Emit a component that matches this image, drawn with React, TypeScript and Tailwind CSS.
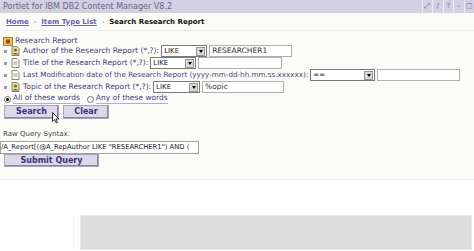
import React from "react";

const F = { fontFamily: '"DejaVu Sans", Verdana, sans-serif' };

function TreeDot() {
  return <span className="w-[3px] h-[3px] bg-[#9a98b8] inline-block mr-[4px]" />;
}

function DocIcon({ person }: { person?: boolean }) {
  return (
    <svg width="9" height="10" viewBox="0 0 9 10" className="mr-[3px] shrink-0">
      <path d="M1 0.5h5l2 2v7h-7z" fill={person ? "#e8dfa0" : "#fff"} stroke="#6b6a58" strokeWidth="0.8" />
      {person ? (
        <>
          <circle cx="4.5" cy="4" r="1.6" fill="#7a6a2a" />
          <path d="M2 8.5c0-2 5-2 5 0z" fill="#7a6a2a" />
        </>
      ) : (
        <path d="M2.5 4h4M2.5 6h4" stroke="#6b6a58" strokeWidth="0.7" />
      )}
    </svg>
  );
}

function Select({ w, value }: { w: string; value: string }) {
  return (
    <div className={`${w} h-[12px] border border-[#7a7a7a] bg-white flex items-center shrink-0`}>
      <span className="flex-1 pl-[2px] text-[7px] text-[#222] leading-none">{value}</span>
      <span className="w-[9px] h-[9px] mr-[1px] bg-[#d8d8d8] border border-[#999] flex items-center justify-center">
        <span className="w-0 h-0 border-l-[2px] border-r-[2px] border-t-[3px] border-l-transparent border-r-transparent border-t-black" />
      </span>
    </div>
  );
}

function Input({ w, value }: { w: string; value?: string }) {
  return (
    <div className={`${w} h-[12px] border border-[#b0b0b0] bg-white flex items-center pl-[2px] text-[7.5px] text-[#333] leading-none shrink-0`}>
      {value}
    </div>
  );
}

function Row({ label, person, sel, selW, inp, inpW, size }: { label: string; person?: boolean; sel: string; selW: string; inp?: string; inpW: string; size: string }) {
  return (
    <div className="flex items-center h-[12px] ml-[4px]">
      <TreeDot />
      <DocIcon person={person} />
      <span className={`${size} text-[#463f78] whitespace-nowrap mr-[2px] leading-none`}>{label}</span>
      <Select w={selW} value={sel} />
      <span className="w-[2px]" />
      <Input w={inpW} value={inp} />
    </div>
  );
}

function Btn({ children, w, h }: { children: React.ReactNode; w: string; h: string }) {
  return (
    <div className={`${w} ${h} bg-[#dcd8ea] border border-[#a8a4bc] shadow-[inset_-1px_-1px_0_#8a86a0] flex items-center justify-center text-[8px] font-bold text-[#3b3478] leading-none`}>
      {children}
    </div>
  );
}

export default function App() {
  return (
    <div style={F} className="w-[474px] h-[251px] bg-white flex flex-col overflow-hidden relative">
      <div className="bg-[#fbfcf8] flex flex-col h-[180px] border-b border-[#eeeeee] shrink-0">
        <div className="h-[13px] bg-[#d3cfe4] flex items-center justify-between shrink-0">
          <span className="pl-[3px] text-[8px] text-[#6a6880] leading-none">Portlet for IBM DB2 Content Manager V8.2</span>
          <div className="flex h-full">
            {["⤢", "/", "?", "–", "□"].map((c, i) => (
              <span key={i} className="w-[10.5px] h-full border-l border-[#ecebf4] flex items-center justify-center text-[7px] text-[#6a6880] leading-none">{c}</span>
            ))}
          </div>
        </div>
        <div className="h-[17px] flex items-center pl-[6px] text-[7px] font-bold leading-none shrink-0 pt-[1px]">
          <span className="text-[#6b62a0] underline">Home</span>
          <span className="text-[#8a88a0] mx-[5px] text-[6px]">›</span>
          <span className="text-[#6b62a0] underline">Item Type List</span>
          <span className="text-[#8a88a0] mx-[5px] text-[6px]">›</span>
          <span className="text-[#111]">Search Research Report</span>
        </div>
        <div className="h-px bg-[#ececf2] mb-[5px] shrink-0" />
        <div className="flex items-center h-[9px] ml-[3px] shrink-0">
          <svg width="10" height="10" viewBox="0 0 10 10" className="mr-[2px]">
            <rect x="0.5" y="1.5" width="9" height="8" fill="#e0c860" stroke="#8a6a20" strokeWidth="0.8" />
            <rect x="3" y="3.5" width="4" height="4" fill="#b04020" />
          </svg>
          <span className="text-[7.6px] text-[#463f78] leading-none">Research Report</span>
        </div>
        <div className="flex flex-col">
          <Row size="text-[7.6px]" label="Author of the Research Report (*,?):" person sel="LIKE" selW="w-[46px]" inp="RESEARCHER1" inpW="w-[83px]" />
          <Row size="text-[7.5px]" label="Title of the Research Report (*,?):" sel="LIKE" selW="w-[46px]" inpW="w-[84px]" />
          <Row size="text-[7.2px]" label="Last Modification date of the Research Report (yyyy-mm-dd-hh.mm.ss.xxxxxx):" sel="==" selW="w-[65px]" inpW="w-[83px]" />
          <Row size="text-[7.5px]" label="Topic of the Research Report (*,?):" person sel="LIKE" selW="w-[47px]" inp="%opic" inpW="w-[82px]" />
        </div>
        <div className="flex items-center h-[12px] ml-[4px] text-[7.5px] text-[#463f78] leading-none">
          <span className="w-[7px] h-[7px] rounded-full border border-[#777] bg-white flex items-center justify-center mr-[2px]">
            <span className="w-[3px] h-[3px] rounded-full bg-black" />
          </span>
          <span className="border-b border-[#b0aed0] pb-[1px]">All of these words</span>
          <span className="w-[7px] h-[7px] rounded-full border border-[#777] bg-white ml-[7px] mr-[2px]" />
          <span className="border-b border-[#b0aed0] pb-[1px]">Any of these words</span>
        </div>
        <div className="flex gap-[4px] ml-[4px] relative">
          <Btn w="w-[55px]" h="h-[14px]">Search</Btn>
          <Btn w="w-[46px]" h="h-[14px]">Clear</Btn>
          <svg width="8" height="12" viewBox="0 0 8 12" className="absolute left-[48px] top-[7px]">
            <path d="M0.5 0.5v9l2.2-2 1.6 3.5 1.3-0.6-1.6-3.4h3z" fill="#fff" stroke="#000" strokeWidth="0.8" />
          </svg>
        </div>
        <div className="mt-[12px] ml-[3px] text-[7px] text-[#444] leading-none">Raw Query Syntax:</div>
        <div className="mt-[3px] w-[199px] h-[13px] border border-[#a0a0a0] bg-white flex items-center text-[6.8px] text-[#222] whitespace-nowrap overflow-hidden leading-none">
          /A_Report[(@A_RepAuthor LIKE "RESEARCHER1") AND (
        </div>
        <div className="ml-[4px]">
          <Btn w="w-[95px]" h="h-[13px]">Submit Query</Btn>
        </div>
      </div>
      <div className="flex-1 flex items-end pb-[1px]">
        <div className="w-[80px] h-[35px] flex justify-end">
          <div className="w-px h-full bg-[#f0f0f0] mr-[6px]" />
        </div>
        <div className="w-[392px] h-[35px] bg-[#dcdcdc] border border-[#e8e8e8]" />
      </div>
    </div>
  );
}
